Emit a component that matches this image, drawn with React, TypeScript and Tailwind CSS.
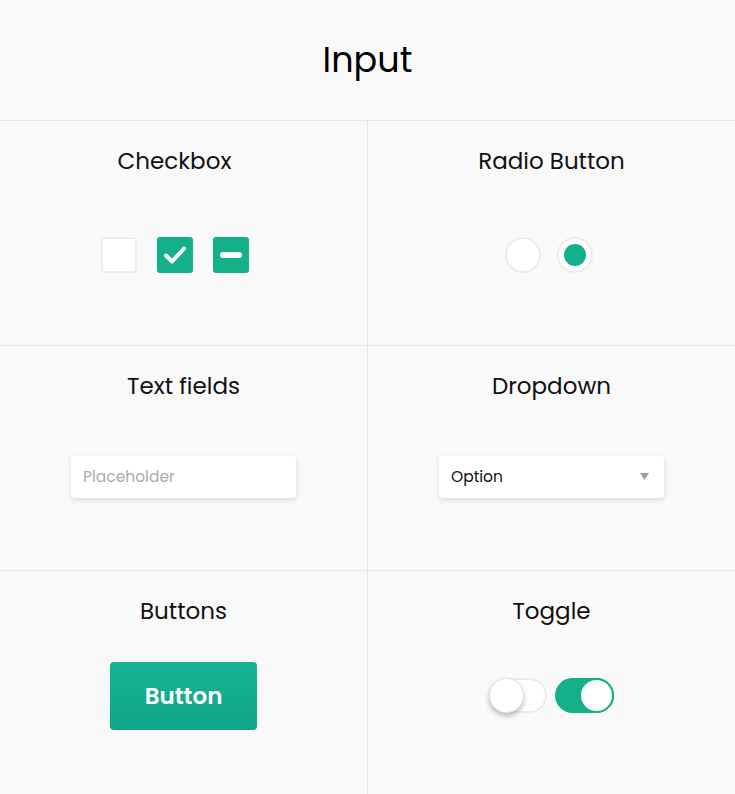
const font = { fontFamily: 'Poppins, "Open Sans", "Noto Sans", sans-serif' };

function Cell({
  title,
  children,
  className = '',
  body = 'pb-[12px]',
}: {
  title: string;
  children: React.ReactNode;
  className?: string;
  body?: string;
}) {
  return (
    <div className={`flex h-[225px] flex-col items-center ${className}`}>
      <h2 className="mt-[24px] text-[23px] leading-[32px] text-[#111]">{title}</h2>
      <div className={`flex flex-1 items-center justify-center ${body}`}>{children}</div>
    </div>
  );
}

export default function App() {
  return (
    <div className="min-h-[794px] w-[735px] bg-[#f9f9f9] text-black" style={font}>
      <header className="flex h-[121px] items-center justify-center border-b border-[#e6e6e6]">
        <h1 className="text-[35px] leading-[44px]">Input</h1>
      </header>

      <div className="grid grid-cols-[368px_1fr]">
        {/* Checkbox */}
        <Cell title="Checkbox" className="border-r border-b border-[#e6e6e6] pr-[18px]" body="pb-[13px]">
          <div className="flex items-center gap-[20px]">
            <div className="h-[36px] w-[36px] rounded-[3px] border-2 border-[#ececec] bg-white" />
            <div className="flex h-[36px] w-[36px] items-center justify-center rounded-[3px] bg-[#14b08a]">
              <svg width="24" height="20" viewBox="0 0 24 20" fill="none">
                <path d="M3 10.5l6 6L21 3.5" stroke="white" strokeWidth="4" strokeLinecap="round" strokeLinejoin="round" />
              </svg>
            </div>
            <div className="flex h-[36px] w-[36px] items-center justify-center rounded-[3px] bg-[#14b08a]">
              <div className="h-[6px] w-[22px] rounded-full bg-white" />
            </div>
          </div>
        </Cell>

        {/* Radio */}
        <Cell title="Radio Button" className="border-b border-[#e6e6e6]" body="pb-[13px] pr-[5px]">
          <div className="flex items-center gap-[16px]">
            <div className="h-[36px] w-[36px] rounded-full border-2 border-[#ececec] bg-white" />
            <div className="flex h-[36px] w-[36px] items-center justify-center rounded-full border-2 border-[#ececec] bg-white">
              <div className="h-[22px] w-[22px] rounded-full bg-[#14b08a]" />
            </div>
          </div>
        </Cell>

        {/* Text field */}
        <Cell title="Text fields" className="border-r border-b border-[#e6e6e6]" body="pb-[19px]">
          <div className="flex h-[42px] w-[225px] items-center rounded-[4px] bg-white px-[12px] text-[15.5px] text-[#a9adb3] shadow-[0_2px_5px_rgba(0,0,0,0.13)]">
            Placeholder
          </div>
        </Cell>

        {/* Dropdown */}
        <Cell title="Dropdown" className="border-b border-[#e6e6e6]" body="pb-[19px]">
          <div className="flex h-[42px] w-[225px] items-center justify-between rounded-[4px] bg-white pl-[12px] pr-[15px] text-[15.5px] text-[#111] shadow-[0_2px_5px_rgba(0,0,0,0.13)]">
            <span>Option</span>
            <svg width="9" height="7" viewBox="0 0 9 7">
              <path d="M0 0h9L4.5 7z" fill="#9a9ea4" />
            </svg>
          </div>
        </Cell>

        {/* Buttons */}
        <Cell title="Buttons" className="border-r border-[#e6e6e6]" body="pb-[31px]">
          <button className="h-[68px] w-[147px] rounded-[4px] bg-gradient-to-b from-[#15b494] to-[#0fa488] text-[23px] font-semibold text-white">
            Button
          </button>
        </Cell>

        {/* Toggle */}
        <Cell title="Toggle" body="pb-[33px]">
          <div className="flex items-center gap-[8px]">
            <div className="relative h-[35px] w-[58px] rounded-full border-2 border-[#ebebeb] bg-white">
              <div className="absolute left-[-2px] top-[-2px] h-[35px] w-[35px] rounded-full border border-[#e3e3e3] bg-white shadow-[0_3px_5px_rgba(0,0,0,0.25)]" />
            </div>
            <div className="relative h-[35px] w-[59px] rounded-full bg-[#14b08a]">
              <div className="absolute right-0 top-0 h-[35px] w-[35px] rounded-full border-2 border-[#14b08a] bg-white" />
            </div>
          </div>
        </Cell>
      </div>
    </div>
  );
}
